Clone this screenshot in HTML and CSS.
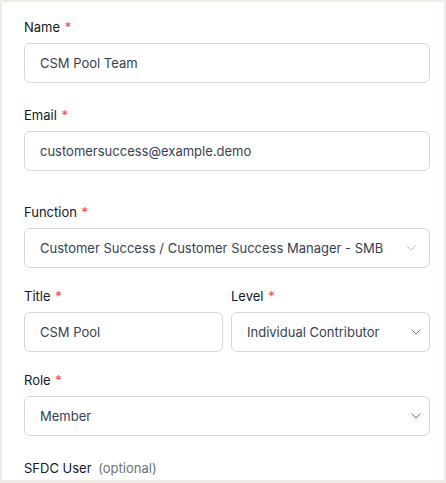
FILE: index.html
```html
<!DOCTYPE html>
<html lang="en">
<head>
<meta charset="utf-8">
<title>Team member form</title>
<link rel="stylesheet" href="styles.css">
</head>
<body>
<div class="card">
  <form class="form">
    <div class="field">
      <label class="label">Name <span class="req">*</span></label>
      <div class="input">CSM Pool Team</div>
    </div>
    <div class="field field--email">
      <label class="label">Email <span class="req">*</span></label>
      <div class="input">customersuccess@example.demo</div>
    </div>
    <div class="field field--tight">
      <label class="label">Function <span class="req">*</span></label>
      <div class="input select select--muted">
        <span>Customer Success / Customer Success Manager - SMB</span>
        <svg class="chev" width="10" height="6" viewBox="0 0 10 6"><path d="M0.5 0.5 L5 5 L9.5 0.5" fill="none" stroke="currentColor" stroke-width="1"/></svg>
      </div>
    </div>
    <div class="row field--tight">
      <div class="field">
        <label class="label">Title <span class="req">*</span></label>
        <div class="input">CSM Pool</div>
      </div>
      <div class="field">
        <label class="label">Level <span class="req">*</span></label>
        <div class="input select">
          <span>Individual Contributor</span>
          <svg class="chev" width="10" height="6" viewBox="0 0 10 6"><path d="M0.5 0.5 L5 5 L9.5 0.5" fill="none" stroke="currentColor" stroke-width="1"/></svg>
        </div>
      </div>
    </div>
    <div class="field">
      <label class="label">Role <span class="req">*</span></label>
      <div class="input select">
        <span>Member</span>
        <svg class="chev" width="10" height="6" viewBox="0 0 10 6"><path d="M0.5 0.5 L5 5 L9.5 0.5" fill="none" stroke="currentColor" stroke-width="1"/></svg>
      </div>
    </div>
    <div class="field">
      <label class="label">SFDC User <span class="opt">(optional)</span></label>
    </div>
  </form>
</div>
</body>
</html>
```

FILE: styles.css
```css
html, body {
  margin: 0;
  padding: 0;
  background: #efece6;
  height: 100%;
  overflow: hidden;
}
body {
  padding: 2px 2px 0 2px;
  box-sizing: border-box;
  font-family: Inter, "Noto Sans", sans-serif;
}
.card {
  background: #ffffff;
  width: 442px;
  height: 478px;
  box-sizing: border-box;
  padding: 15px 14px 0 22px;
  overflow: hidden;
}
.form {
  display: flex;
  flex-direction: column;
}
.field {
  display: flex;
  flex-direction: column;
  margin-bottom: 22px;
}
.field--email {
  margin-bottom: 31px;
}
.field--tight {
  margin-bottom: 18px;
}
.row {
  display: grid;
  grid-template-columns: 1fr 1fr;
  column-gap: 8px;
}
.row .field {
  margin-bottom: 0;
}
.label {
  font-size: 13px;
  line-height: 20px;
  font-weight: 400;
  color: #111827;
  margin-bottom: 6px;
}
.req {
  color: #ef4444;
  margin-left: 1px;
}
.opt {
  color: #6b7280;
  margin-left: 3px;
}
.input {
  height: 40px;
  box-sizing: border-box;
  border: 1px solid #d5d7dc;
  border-radius: 6px;
  padding: 0 15px;
  display: flex;
  align-items: center;
  font-size: 13px;
  color: #374151;
  white-space: nowrap;
}
.select {
  justify-content: space-between;
  padding-right: 8px;
}
.chev {
  color: #6b7280;
  flex: none;
}
.select--muted {
  padding-right: 13px;
}
.select--muted .chev {
  color: #c4c7cf;
}
```
